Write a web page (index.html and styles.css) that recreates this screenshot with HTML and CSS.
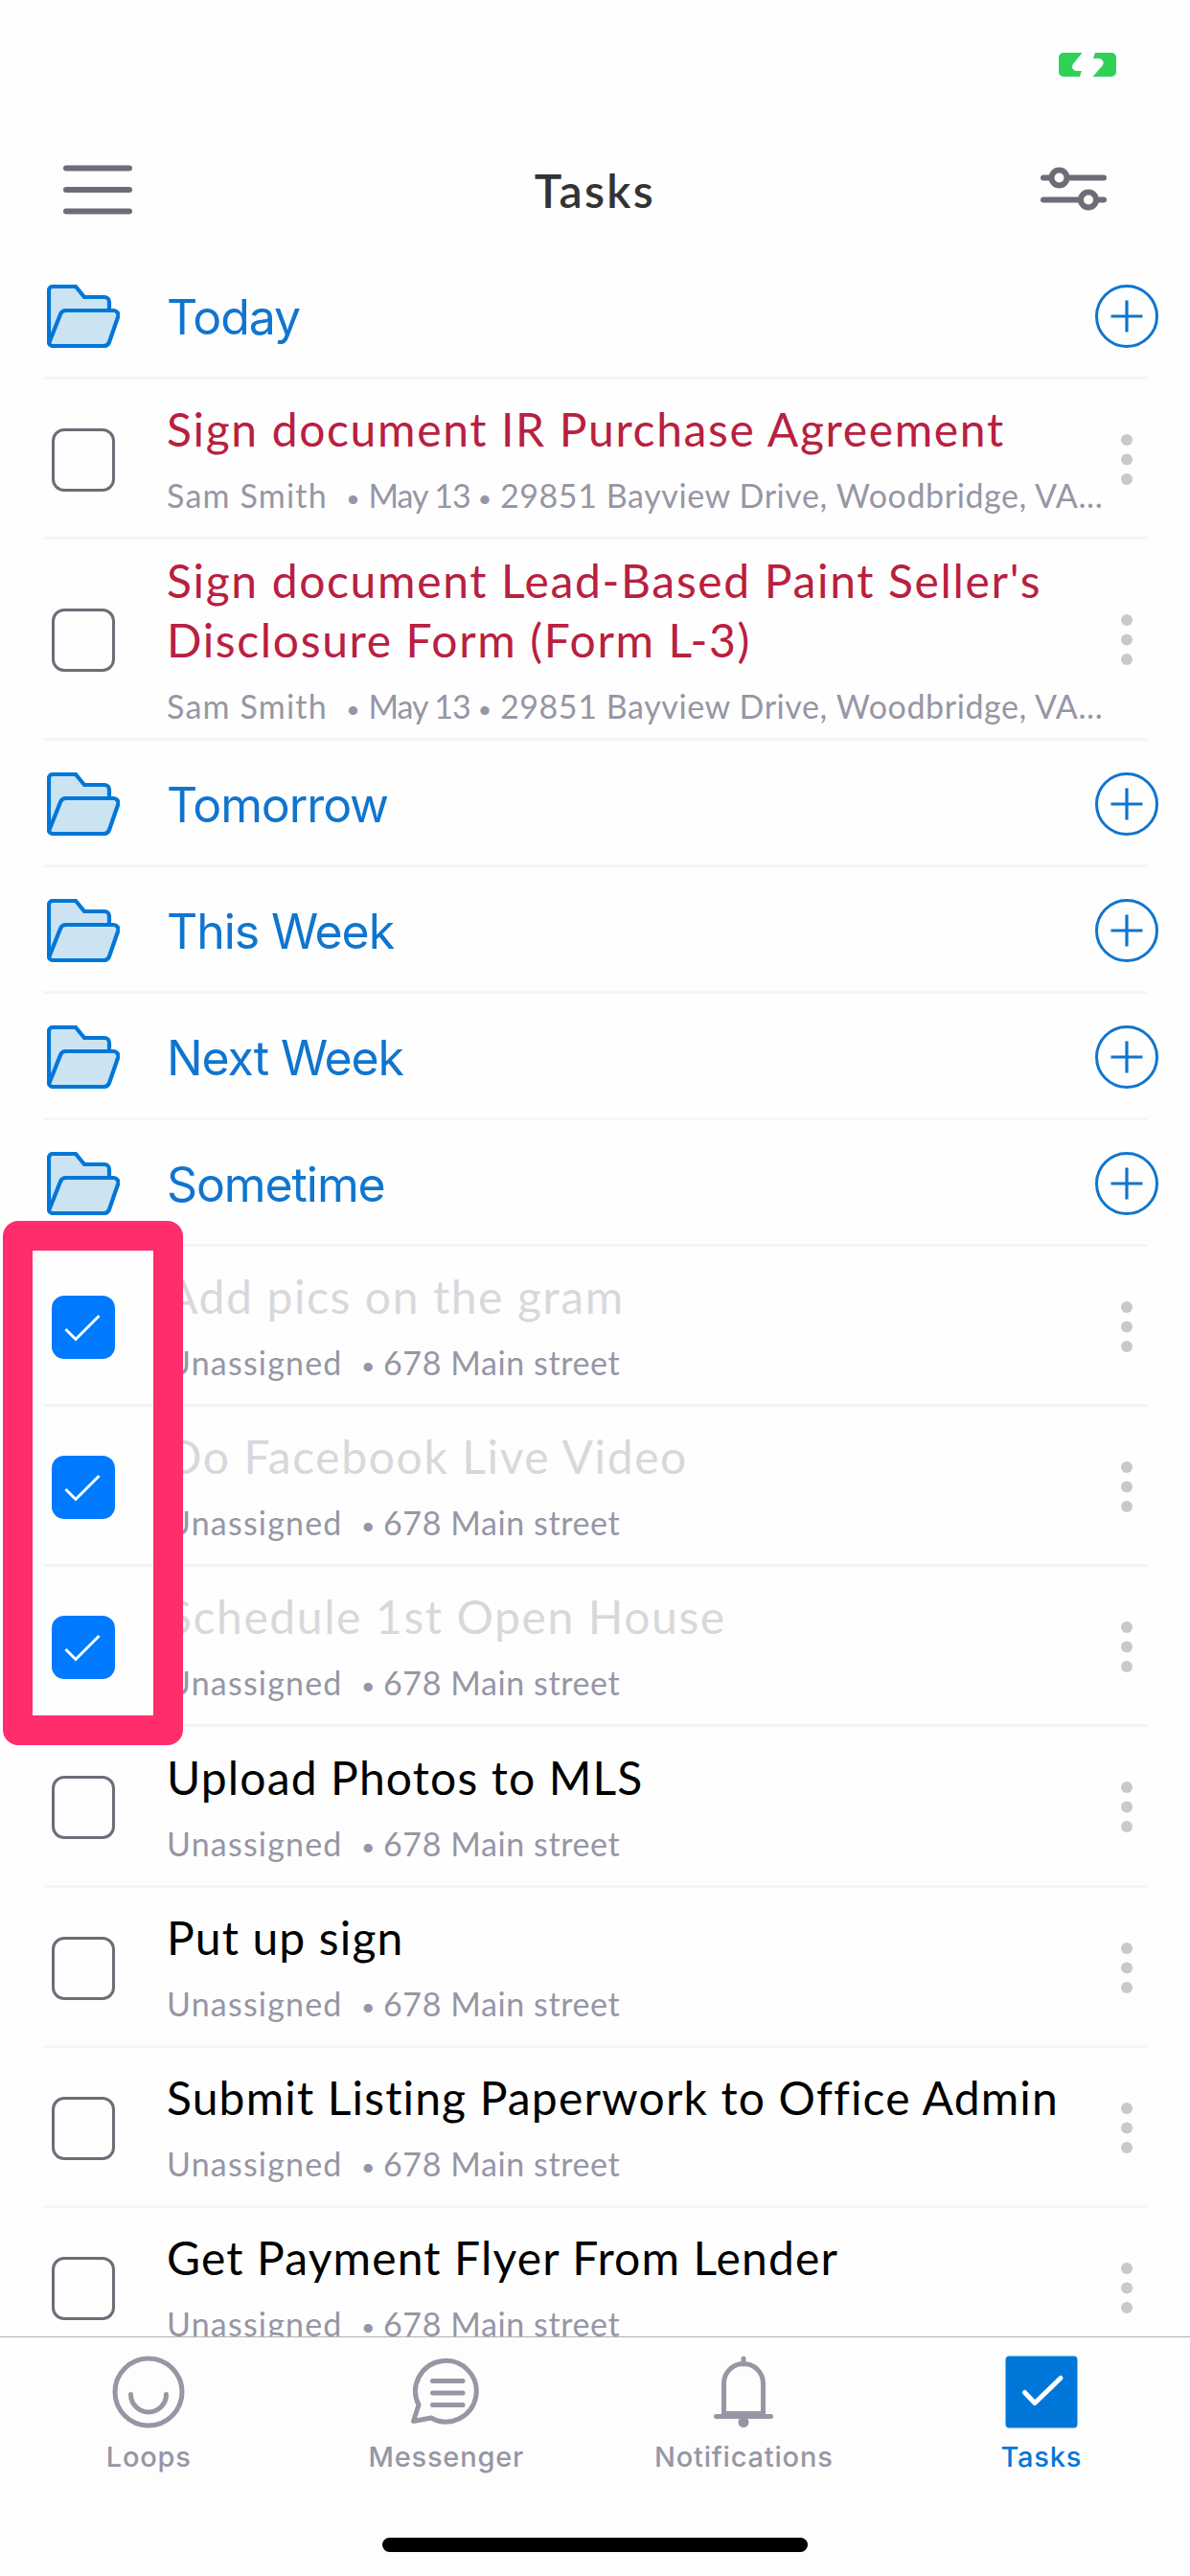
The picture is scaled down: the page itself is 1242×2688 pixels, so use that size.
FILE: index.html
```
<!DOCTYPE html>
<html lang="en">
<head>
    <meta charset="UTF-8">
    <title>Tasks</title>
    <link rel="stylesheet" href="styles.css">
</head>
<body>
    <svg class="sprite">
        <symbol id="folder" viewBox="0 0 76 66">
            <path d="M2 60V6a4 4 0 0 1 4-4h24l9 11h21a5 5 0 0 1 5 5v9" fill="#cce3f2"/>
            <path d="M2 60L14 31a6 6 0 0 1 5-4H69a5 5 0 0 1 5 7L65 60a6 6 0 0 1-5 4H6a4 4 0 0 1-4-4z" fill="#cce3f2"/>
            <path d="M2 60V6a4 4 0 0 1 4-4h24l9 11h21a5 5 0 0 1 5 5v9M2.500 60L14 31a6 6 0 0 1 5-4H69a5 5 0 0 1 5 7L65 60a6 6 0 0 1-5 4H6a4 4 0 0 1-4-4" fill="none" stroke="#0077d8" stroke-width="4.200"/>
        </symbol>
        <symbol id="plus" viewBox="0 0 66 66">
            <circle cx="33" cy="33" r="31.500" fill="none" stroke="#0f75cf" stroke-width="3"/>
            <path d="M16.500 33h33M33 16.500v33" stroke="#0f75cf" stroke-width="3.200"/>
        </symbol>
        <symbol id="check" viewBox="0 0 66 66">
            <path d="M14.500 35l10.500 10.500L49.500 21" fill="none" stroke="#fff" stroke-width="3"/>
        </symbol>
        <symbol id="dots" viewBox="0 0 12 54">
            <circle cx="6" cy="6" r="6"/><circle cx="6" cy="26.500" r="6"/><circle cx="6" cy="47" r="6"/>
        </symbol>
    </svg>

    <div class="status-bar">
        <svg class="battery" viewBox="0 0 60 25">
            <rect width="60" height="25" rx="5" fill="#30d158"/>
            <path d="M24.500 0h13.500L36 6h6.500q5.500 1.500 3.500 7L35.500 25H22l1.800-6h-6q-5.500-2-3-7z" fill="#fff"/>
        </svg>
    </div>

    <div class="header">
        <svg class="menu-icon" viewBox="0 0 72 52"><path d="M3 3.500h66M3 26h66M3 48.500h66"/></svg>
        <h1>Tasks</h1>
        <svg class="filter-icon" viewBox="0 0 70 46">
            <path d="M3 11.500h8M28 11.500h38M3 34.500h38M58 34.500h8"/>
            <circle cx="19.500" cy="11.500" r="8"/><circle cx="50" cy="34.500" r="8"/>
        </svg>
    </div>

    <div class="list">
        <div class="section"><svg class="folder"><use href="#folder"/></svg><h2>Today</h2><svg class="plus"><use href="#plus"/></svg></div>
        <div class="task overdue">
            <span class="checkbox"></span>
            <div class="info">
                <h3>Sign document IR Purchase Agreement</h3>
                <p><span class="name">Sam Smith</span>&nbsp; <b>•</b> <span class="date">May 13</span> <b>•</b> 29851 Bayview Drive, Woodbridge, VA...</p>
            </div>
            <svg class="dots"><use href="#dots"/></svg>
        </div>
        <div class="task overdue tall">
            <span class="checkbox"></span>
            <div class="info">
                <h3>Sign document Lead-Based Paint Seller's<br>Disclosure Form (Form L-3)</h3>
                <p><span class="name">Sam Smith</span>&nbsp; <b>•</b> <span class="date">May 13</span> <b>•</b> 29851 Bayview Drive, Woodbridge, VA...</p>
            </div>
            <svg class="dots"><use href="#dots"/></svg>
        </div>
        <div class="section"><svg class="folder"><use href="#folder"/></svg><h2>Tomorrow</h2><svg class="plus"><use href="#plus"/></svg></div>
        <div class="section"><svg class="folder"><use href="#folder"/></svg><h2>This Week</h2><svg class="plus"><use href="#plus"/></svg></div>
        <div class="section"><svg class="folder"><use href="#folder"/></svg><h2>Next Week</h2><svg class="plus"><use href="#plus"/></svg></div>
        <div class="section"><svg class="folder"><use href="#folder"/></svg><h2>Sometime</h2><svg class="plus"><use href="#plus"/></svg></div>
        <div class="task done">
            <span class="checkbox"><svg><use href="#check"/></svg></span>
            <div class="info">
                <h3>Add pics on the gram</h3>
                <p><span class="name">Unassigned</span>&nbsp; <b>•</b> 678 Main street</p>
            </div>
            <svg class="dots"><use href="#dots"/></svg>
        </div>
        <div class="task done">
            <span class="checkbox"><svg><use href="#check"/></svg></span>
            <div class="info">
                <h3>Do Facebook Live Video</h3>
                <p><span class="name">Unassigned</span>&nbsp; <b>•</b> 678 Main street</p>
            </div>
            <svg class="dots"><use href="#dots"/></svg>
        </div>
        <div class="task done">
            <span class="checkbox"><svg><use href="#check"/></svg></span>
            <div class="info">
                <h3>Schedule 1st Open House</h3>
                <p><span class="name">Unassigned</span>&nbsp; <b>•</b> 678 Main street</p>
            </div>
            <svg class="dots"><use href="#dots"/></svg>
        </div>
        <div class="task first-open">
            <span class="checkbox"></span>
            <div class="info">
                <h3>Upload Photos to MLS</h3>
                <p><span class="name">Unassigned</span>&nbsp; <b>•</b> 678 Main street</p>
            </div>
            <svg class="dots"><use href="#dots"/></svg>
        </div>
        <div class="task">
            <span class="checkbox"></span>
            <div class="info">
                <h3>Put up sign</h3>
                <p><span class="name">Unassigned</span>&nbsp; <b>•</b> 678 Main street</p>
            </div>
            <svg class="dots"><use href="#dots"/></svg>
        </div>
        <div class="task">
            <span class="checkbox"></span>
            <div class="info">
                <h3>Submit Listing Paperwork to Office Admin</h3>
                <p><span class="name">Unassigned</span>&nbsp; <b>•</b> 678 Main street</p>
            </div>
            <svg class="dots"><use href="#dots"/></svg>
        </div>
        <div class="task">
            <span class="checkbox"></span>
            <div class="info">
                <h3>Get Payment Flyer From Lender</h3>
                <p><span class="name">Unassigned</span>&nbsp; <b>•</b> 678 Main street</p>
            </div>
            <svg class="dots"><use href="#dots"/></svg>
        </div>
    </div>

    <div class="tab-bar">
        <div class="tabs">
            <div class="tab">
                <svg viewBox="0 0 76 76">
                    <circle cx="38" cy="38" r="35"/>
                    <path d="M19.500 40.500a18.500 18.500 0 0 0 37 0"/>
                </svg>
                <span>Loops</span>
            </div>
            <div class="tab">
                <svg viewBox="0 0 76 76">
                    <path d="M9 51.500A31.800 31.800 0 1 1 22 65L3.500 68.500z"/>
                    <path d="M23.500 26.500h31.500M23.500 39h31.500M23.500 51.500h31.500"/>
                </svg>
                <span>Messenger</span>
            </div>
            <div class="tab">
                <svg viewBox="0 0 76 76">
                    <path d="M38 3v6M17.500 62V29a20.500 20.500 0 0 1 41 0v33"/>
                    <path d="M9.500 63.500h57M18 60.500h40"/>
                    <circle class="solid" cx="38" cy="69.500" r="5.500"/>
                </svg>
                <span>Notifications</span>
            </div>
            <div class="tab active">
                <svg viewBox="0 0 76 76">
                    <rect class="solid" x=".5" y=".5" width="75" height="75" rx="4"/>
                    <path class="tick" d="M20.500 38.500l10.500 11L58 23.500"/>
                </svg>
                <span>Tasks</span>
            </div>
        </div>
        <div class="home-indicator"></div>
    </div>

    <div class="highlight"></div>
</body>
</html>
```
FILE: styles.css
```
* {
    box-sizing: border-box;
}

body {
    margin: 0;
    width: 1242px;
    height: 2688px;
    display: flex;
    flex-direction: column;
    position: relative;
    overflow: hidden;
    background: #fefefe;
    font-family: Lato, "Liberation Sans", sans-serif;
}

h1, h2, h3, p {
    margin: 0;
    font-weight: 400;
    white-space: nowrap;
}

svg {
    display: block;
    flex: none;
}

.sprite {
    display: none;
}

.status-bar {
    height: 132px;
    padding: 55px 77px 0 0;
    display: flex;
    justify-content: flex-end;
}

.battery {
    width: 60px;
    height: 25px;
}

.header {
    height: 132px;
    padding: 0 86px 0 66px;
    display: flex;
    align-items: center;
}

.header h1 {
    flex: 1;
    margin-left: 18px;
    padding-top: 2px;
    text-align: center;
    font-size: 48px;
    font-weight: 600;
    line-height: 60px;
    color: #333;
    letter-spacing: 2.4px;
}

.menu-icon, .filter-icon {
    fill: none;
    stroke: #6d6d78;
    stroke-width: 6;
    stroke-linecap: round;
}

.menu-icon {
    width: 72px;
    height: 52px;
}

.filter-icon {
    width: 70px;
    height: 46px;
    margin-bottom: 2px;
}

.list {
    height: 2174px;
    padding: 0 33px 0 45px;
    overflow: hidden;
}

.section, .task {
    display: flex;
    align-items: center;
    background: linear-gradient(#f5f5f5, #f5f5f5) 0 100% / 1152px 3px no-repeat;
}

.section {
    height: 132px;
    padding-left: 4px;
}

.section h2 {
    flex: 1;
    margin-left: 49px;
    padding-top: 2px;
    font-family: Inter, sans-serif;
    font-size: 50px;
    letter-spacing: -1.1px;
    color: #0f75cf;
}

.folder {
    width: 76px;
    height: 66px;
}

.plus {
    width: 66px;
    height: 66px;
}

.task {
    height: 167px;
    padding-left: 9px;
    padding-right: 27px;
}

.task.tall {
    height: 210px;
}

.task.first-open {
    height: 168px;
}

.checkbox {
    flex: none;
    width: 66px;
    height: 66px;
    border: 3px solid #6d6d78;
    border-radius: 13px;
}

.done .checkbox {
    border: none;
    background: #007aff;
}

.checkbox svg {
    width: 66px;
    height: 66px;
}

.info {
    flex: 1;
    min-width: 0;
    margin-left: 54px;
    padding-bottom: 1px;
}

.info h3 {
    font-size: 48px;
    line-height: 62px;
    letter-spacing: 1.15px;
    color: #000;
}

.overdue .info h3 {
    letter-spacing: 1.65px;
    color: #b9203f;
}

.done .info h3 {
    letter-spacing: 1.6px;
    color: #d8d8dc;
}

.info p {
    margin-top: 14px;
    font-size: 34px;
    line-height: 48px;
    letter-spacing: 0.6px;
    color: #9696a5;
}

.info .name {
    margin-right: 2px;
    letter-spacing: 1.2px;
}

.info .date {
    letter-spacing: -1px;
}

.info b {
    font-family: "Liberation Sans", sans-serif;
    font-weight: 400;
    line-height: 0;
    vertical-align: -3px;
}

.dots {
    width: 12px;
    height: 54px;
    fill: #c9c9c9;
}

.tab-bar {
    flex: 1;
    border-top: 1px solid #b0b0b4;
    background: #fdfdfd;
}

.tabs {
    display: flex;
    padding-top: 19px;
}

.tab {
    flex: 1;
    display: flex;
    flex-direction: column;
    align-items: center;
    color: #9696a5;
}

.tab svg {
    width: 76px;
    height: 76px;
    fill: none;
    stroke: currentColor;
    stroke-width: 5;
    stroke-linecap: round;
    stroke-linejoin: round;
}

.tab .solid {
    fill: currentColor;
    stroke: none;
}

.tab .tick {
    stroke: #fff;
}

.tab.active {
    color: #0077d8;
}

.tab span {
    margin-top: 12px;
    font-family: Inter, sans-serif;
    font-size: 29px;
    font-weight: 500;
    line-height: 36px;
    letter-spacing: 0.8px;
}

.home-indicator {
    width: 444px;
    height: 15px;
    margin: 66px auto 0;
    border-radius: 8px;
    background: #000;
}

/* pink frame round the completed tasks */
.highlight {
    position: absolute;
    left: 3px;
    top: 1274px;
    width: 188px;
    height: 547px;
    border: 31px solid #ff2d6c;
    border-radius: 16px;
}
```
